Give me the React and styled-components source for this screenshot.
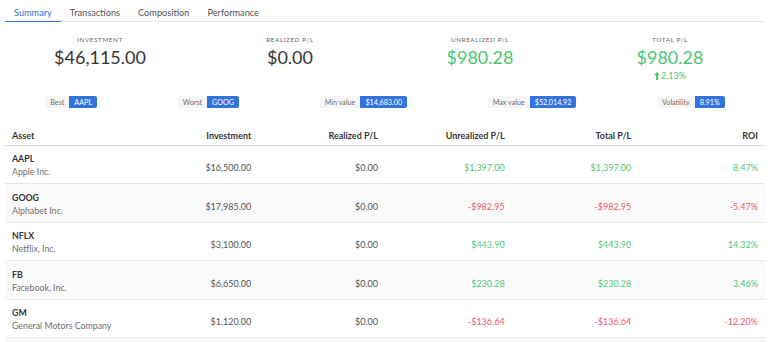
import React from "react";
import styled, { createGlobalStyle } from "styled-components";

const Global = createGlobalStyle`
  html, body { margin: 0; padding: 0; background: #fff; }
  body { font-family: Lato, "Noto Sans", sans-serif; color: #4a4a4a; -webkit-font-smoothing: antialiased; }
  * { box-sizing: border-box; }
`;

const Page = styled.div`
  width: 768px;
  padding: 0 3px 0 5px;
`;

const Tabs = styled.ul`
  display: flex;
  list-style: none;
  margin: 0;
  padding: 0;
  border-bottom: 1px solid #e4e4e4;
`;

const Tab = styled.li`
  padding: 7px 9px 3px;
  font-size: 9.2px;
  line-height: 11px;
  color: ${(p) => (p.$active ? "#3273dc" : "#555")};
  border-bottom: 1px solid ${(p) => (p.$active ? "#3273dc" : "transparent")};
  margin-bottom: -1px;
`;

const Stats = styled.div`
  display: grid;
  grid-template-columns: repeat(4, 1fr);
  padding-top: 14px;
  height: 69px;
`;

const Stat = styled.div`
  display: flex;
  flex-direction: column;
  align-items: center;
`;

const Heading = styled.div`
  font-size: 6.3px;
  letter-spacing: 0.6px;
  text-transform: uppercase;
  color: #666;
  line-height: 8px;
`;

const Value = styled.div`
  font-size: 18px;
  line-height: 22px;
  margin-top: 2px;
  color: ${(p) => (p.$green ? "#48c774" : "#363636")};
`;

const Change = styled.div`
  display: flex;
  align-items: center;
  gap: 1px;
  font-size: 9px;
  line-height: 12px;
  color: #48c774;
  margin-top: 2px;
`;

const TagRow = styled.div`
  display: flex;
  justify-content: space-around;
  align-items: center;
  height: 22px;
`;

const Tags = styled.div`
  display: flex;
`;

const Tag = styled.span`
  display: inline-flex;
  align-items: center;
  height: 12px;
  padding: 0 5px;
  font-size: 7.2px;
  white-space: nowrap;
  background: ${(p) => (p.$blue ? "#3273dc" : "#f5f5f5")};
  color: ${(p) => (p.$blue ? "#fff" : "#6f6f6f")};
  border-radius: ${(p) => (p.$blue ? "0 2px 2px 0" : "2px 0 0 2px")};
`;

const Table = styled.table`
  width: 760px;
  table-layout: fixed;
  border-collapse: collapse;
  margin-top: 8px;
  font-size: 9px;
`;

const Th = styled.th`
  text-align: ${(p) => (p.$left ? "left" : "right")};
  font-weight: 700;
  color: #363636;
  padding: 9px 7px 3px;
  height: 24px;
  border-bottom: 1px solid #dbdbdb;
  font-size: 9px;
`;

const Tr = styled.tr`
  background: ${(p) => (p.$striped ? "#fafafa" : "#fff")};
`;

const Td = styled.td`
  text-align: ${(p) => (p.$left ? "left" : "right")};
  padding: ${(p) => (p.$left ? "4px 7px 1.5px" : "8px 7px 1.5px")};
  height: 38.5px;
  border-bottom: 1px solid #e8e8e8;
  vertical-align: middle;
  color: ${(p) => (p.$tone === "pos" ? "#4fc878" : p.$tone === "neg" ? "#ef5770" : "#555")};
`;

const Symbol = styled.div`
  font-weight: 700;
  color: #363636;
  font-size: 8.8px;
  line-height: 12px;
`;

const Company = styled.div`
  color: #6f6f6f;
  font-size: 8.8px;
  line-height: 13px;
`;

const Up = () => (
  <svg width="6" height="8" viewBox="0 0 6 8">
    <path d="M3 0 L6 3.2 L4 3.2 L4 8 L2 8 L2 3.2 L0 3.2 Z" fill="#48c774" />
  </svg>
);

const rows = [
  ["AAPL", "Apple Inc.", "$16,500.00", "$0.00", "$1,397.00", "$1,397.00", "8.47%", "pos"],
  ["GOOG", "Alphabet Inc.", "$17,985.00", "$0.00", "-$982.95", "-$982.95", "-5.47%", "neg"],
  ["NFLX", "Netflix, Inc.", "$3,100.00", "$0.00", "$443.90", "$443.90", "14.32%", "pos"],
  ["FB", "Facebook, Inc.", "$6,650.00", "$0.00", "$230.28", "$230.28", "3.46%", "pos"],
  ["GM", "General Motors Company", "$1,120.00", "$0.00", "-$136.64", "-$136.64", "-12.20%", "neg"],
  ["", "", "", "", "", "", "", ""],
];

const tags = [
  ["Best", "AAPL"],
  ["Worst", "GOOG"],
  ["Min value", "$14,683.00"],
  ["Max value", "$52,014.92"],
  ["Volatility", "8.91%"],
];

export default function App() {
  return (
    <Page>
      <Global />
      <Tabs>
        <Tab $active>Summary</Tab>
        <Tab>Transactions</Tab>
        <Tab>Composition</Tab>
        <Tab>Performance</Tab>
      </Tabs>
      <Stats>
        <Stat>
          <Heading>Investment</Heading>
          <Value>$46,115.00</Value>
        </Stat>
        <Stat>
          <Heading>Realized P/L</Heading>
          <Value>$0.00</Value>
        </Stat>
        <Stat>
          <Heading>Unrealized P/L</Heading>
          <Value $green>$980.28</Value>
        </Stat>
        <Stat>
          <Heading>Total P/L</Heading>
          <Value $green>$980.28</Value>
          <Change>
            <Up />
            2.13%
          </Change>
        </Stat>
      </Stats>
      <TagRow>
        {tags.map(([a, b]) => (
          <Tags key={a}>
            <Tag>{a}</Tag>
            <Tag $blue>{b}</Tag>
          </Tags>
        ))}
      </TagRow>
      <Table>
        <thead>
          <tr>
            <Th $left>Asset</Th>
            <Th>Investment</Th>
            <Th>Realized P/L</Th>
            <Th>Unrealized P/L</Th>
            <Th>Total P/L</Th>
            <Th>ROI</Th>
          </tr>
        </thead>
        <tbody>
          {rows.map((r, i) => (
            <Tr key={i} $striped={i % 2 === 1}>
              <Td $left>
                <Symbol>{r[0]}</Symbol>
                <Company>{r[1]}</Company>
              </Td>
              <Td>{r[2]}</Td>
              <Td>{r[3]}</Td>
              <Td $tone={r[7]}>{r[4]}</Td>
              <Td $tone={r[7]}>{r[5]}</Td>
              <Td $tone={r[7]}>{r[6]}</Td>
            </Tr>
          ))}
        </tbody>
      </Table>
    </Page>
  );
}
